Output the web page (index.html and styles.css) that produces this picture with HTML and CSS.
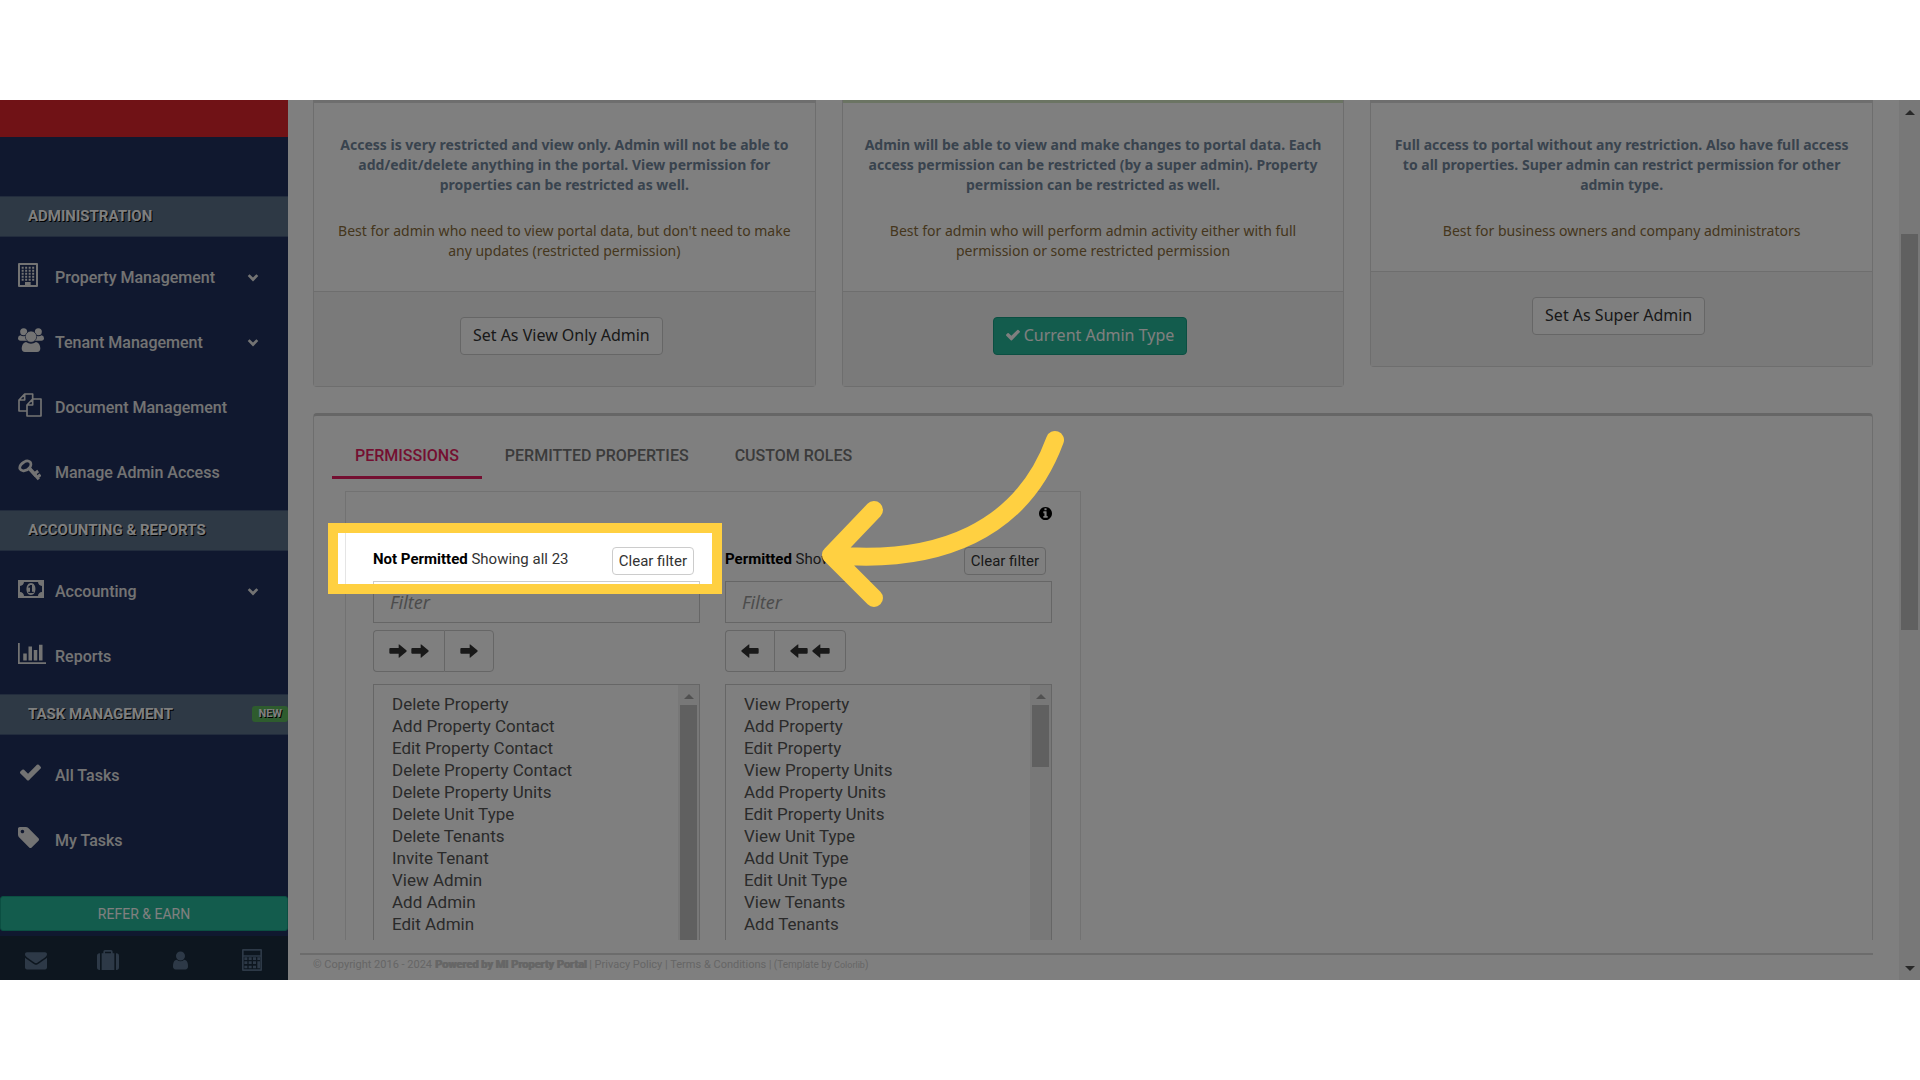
FILE: index.html
```html
<!DOCTYPE html>
<html lang="en">
<head>
<meta charset="utf-8">
<title>Admin Permissions</title>
<link rel="stylesheet" href="styles.css">
</head>
<body>
<svg class="sprite" aria-hidden="true">
  <symbol id="check" viewBox="121 300 1550 1250"><path d="M1671 566q0 40-28 68l-724 724-136 136q-28 28-68 28t-68-28l-136-136-362-362q-28-28-28-68t28-68l136-136q28-28 68-28t68 28l294 295 656-657q28-28 68-28t68 28l136 136q28 28 28 68z"/></symbol>
  <symbol id="chevron" viewBox="0 0 36 26"><path d="M5 6l13 13L31 6" fill="none" stroke="currentColor" stroke-width="8"/></symbol>
  <symbol id="right" viewBox="0 0 54 42"><path d="M4 12h25V2q0-3 3 0l20 17q2 2 0 4L32 40q-3 3-3 0V29H4q-3 0-3-3V15q0-3 3-3z"/></symbol>
  <symbol id="left" viewBox="0 0 54 42"><path d="M50 12H25V2q0-3-3 0L2 19q-2 2 0 4l20 17q3 3 3 0V29h25q3 0 3-3V15q0-3-3-3z"/></symbol>
</svg>

<div class="frame">
  <aside class="sidebar">
    <div class="brand"></div>
    <div class="profile"></div>

    <h3 class="section">Administration</h3>
    <ul class="menu">
      <li><a href="#"><span class="icon"><svg width="20" height="24" viewBox="0 0 60 72"><path fill-rule="evenodd" d="M3 0h54q3 0 3 3v66q0 3-3 3H3q-3 0-3-3V3q0-3 3-3zM6 6v60h15v-9h17v9h16V6z"/><path d="M11 14h38M11 23h38M11 32h38M11 41h38M11 50h38" fill="none" stroke="currentColor" stroke-width="6" stroke-dasharray="6 4.500"/></svg></span>Property Management<svg class="chev" width="12" height="9"><use href="#chevron"/></svg></a></li>
      <li><a href="#"><span class="icon"><svg width="26" height="24" viewBox="0 0 78 72"><circle cx="17" cy="11" r="10.500"/><circle cx="61" cy="11" r="10.500"/><path d="M7 22q10 6 17 0 1 10 5 16H8q-8 0-8-7 0-8 7-9zM71 22q-10 6-17 0-1 10-5 16h21q8 0 8-7 0-8-7-9z"/><circle cx="39" cy="26" r="17" stroke="#20305e" stroke-width="2"/><path d="M24 42q15 11 30 0 12 3 13 19 0 11-10 11H21q-10 0-10-11 1-16 13-19z"/></svg></span>Tenant Management<svg class="chev" width="12" height="9"><use href="#chevron"/></svg></a></li>
      <li><a href="#"><span class="icon"><svg width="24" height="24" viewBox="0 0 72 72"><g fill="none" stroke="currentColor" stroke-width="5" stroke-linejoin="round"><path d="M27 54H3V21L20 3h24v14M20 3v18H3M27 69V36l17-18h25v51zM44 18v18H27"/></g></svg></span>Document Management</a></li>
      <li><a href="#"><span class="icon"><svg width="23" height="22" viewBox="0 0 68 66"><g fill="none" stroke="currentColor"><path d="M18 9q10-7 18 0 5 8-1 16-7 9-16 10-10 2-14-6-2-11 13-20z" stroke-width="8"/><path d="M34 29l28 32M48 45l12-9M54 57l13-10" stroke-width="9"/></g><path d="M30 32l7-8 20 22-7 8z"/></svg></span>Manage Admin Access</a></li>
    </ul>

    <h3 class="section">Accounting &amp; Reports</h3>
    <ul class="menu">
      <li><a href="#"><span class="icon"><svg width="26" height="18" viewBox="0 0 78 54"><path fill-rule="evenodd" d="M0 0h78v54H0zM18 6Q17 17 6 18v18q11 1 12 12h42q1-11 12-12V18Q61 17 60 6zM39 9c18 0 18 36 0 36s-18-36 0-36zM37 15l-7 6 3 3 3-2v13h-5v4h16v-4h-5V15z"/></svg></span>Accounting<svg class="chev" width="12" height="9"><use href="#chevron"/></svg></a></li>
      <li><a href="#"><span class="icon"><svg width="28" height="21" viewBox="0 128 2048 1536"><path d="M640 896v512h-256v-512h256zm384-512v1024h-256v-1024h256zm1024 1152v128h-2048v-1536h128v1408h1920zm-640-896v768h-256v-768h256zm384-384v1152h-256v-1152h256z"/></svg></span>Reports</a></li>
    </ul>

    <h3 class="section">Task Management<span class="badge">NEW</span></h3>
    <ul class="menu">
      <li><a href="#"><span class="icon tick"><svg width="21" height="17"><use href="#check"/></svg></span>All Tasks</a></li>
      <li><a href="#"><span class="icon"><svg width="21" height="21" viewBox="128 128 1515 1515"><path d="M576 448q0-53-37.500-90.500t-90.500-37.500-90.500 37.500-37.500 90.500 37.500 90.500 90.500 37.500 90.500-37.500 37.500-90.500zm1067 576q0 53-37 90l-491 492q-39 37-91 37-53 0-90-37l-715-716q-38-37-64.500-101t-26.500-117v-416q0-52 38-90t90-38h416q53 0 117 26.500t102 64.500l715 714q37 39 37 91z"/></svg></span>My Tasks</a></li>
    </ul>

    <button class="refer" type="button">REFER &amp; EARN</button>
    <nav class="shortcuts">
      <a href="#" aria-label="Messages"><svg width="22" height="22" viewBox="0 0 1792 1792"><path d="M1792 710v794q0 66-47 113t-113 47h-1472q-66 0-113-47t-47-113v-794q44 49 101 87 362 246 497 345 57 42 92.500 65.500t94.500 48 110 24.500h2q51 0 110-24.500t94.500-48 92.500-65.500q170-123 498-345 57-39 100-87zm0-294q0 79-49 151t-122 123q-376 261-468 325-10 7-42.500 31t-54 38.500-52 32.500-57.500 27-50 9h-2q-23 0-50-9t-57.500-27-52-32.500-54-38.500-42.500-31q-91-64-262-182.500t-205-142.500q-62-42-117-115.500t-55-136.500q0-78 41.500-130t118.500-52h1472q65 0 112.500 47t47.500 113z"/></svg></a>
      <a href="#" aria-label="Portfolio"><svg width="22" height="20" viewBox="0 0 66 60"><path fill-rule="evenodd" d="M14 10h5V5q0-5 5-5h18q5 0 5 5v5h5v50H14zM24 10h18V5H24z"/><path d="M9 10v50H8q-8 0-8-8V18q0-8 8-8zM57 10v50h1q8 0 8-8V18q0-8-8-8z"/></svg></a>
      <a href="#" aria-label="Account"><svg width="21" height="21" viewBox="0 0 1792 1792"><path d="M1536 1399q0 109-62.500 187t-150.500 78h-854q-88 0-150.500-78t-62.500-187q0-85 8.500-160.500t31.500-152 58.500-131 94-89 134.500-34.500q131 128 313 128t313-128q76 0 134.500 34.500t94 89 58.500 131 31.500 152 8.500 160.500zm-256-887q0 159-112.500 271.500t-271.500 112.500-271.500-112.500-112.500-271.500 112.500-271.500 271.500-112.500 271.500 112.500 112.500 271.500z"/></svg></a>
      <a href="#" aria-label="Calculator"><svg width="20" height="22" viewBox="0 0 60 66"><path fill-rule="evenodd" d="M3 0h54q3 0 3 3v60q0 3-3 3H3q-3 0-3-3V3q0-3 3-3zM5 5v14h50V5zM5 23v38h50V23z"/><path d="M7 29h37M7 41h37M7 54h37" fill="none" stroke="currentColor" stroke-width="8" stroke-dasharray="9 4"/><path d="M46 25h8v8h-8zM46 37h8v21h-8z"/></svg></a>
    </nav>
  </aside>

  <div class="page">
    <main class="content">
      <section class="cards">
        <article class="card">
          <div class="card-body">
            <p class="what">Access is very restricted and view only. Admin will not be able to add/edit/delete anything in the portal. View permission for properties can be restricted as well.</p>
            <p class="best">Best for admin who need to view portal data, but don't need to make any updates (restricted permission)</p>
          </div>
          <div class="card-foot"><button class="btn" type="button">Set As View Only Admin</button></div>
        </article>
        <article class="card current">
          <div class="card-body">
            <p class="what">Admin will be able to view and make changes to portal data. Each access permission can be restricted (by a super admin). Property permission can be restricted as well.</p>
            <p class="best">Best for admin who will perform admin activity either with full permission or some restricted permission</p>
          </div>
          <div class="card-foot"><button class="btn success" type="button"><svg width="14" height="12"><use href="#check"/></svg>Current Admin Type</button></div>
        </article>
        <article class="card">
          <div class="card-body">
            <p class="what">Full access to portal without any restriction. Also have full access to all properties. Super admin can restrict permission for other admin type.</p>
            <p class="best">Best for business owners and company administrators</p>
          </div>
          <div class="card-foot"><button class="btn" type="button">Set As Super Admin</button></div>
        </article>
      </section>

      <section class="panel">
        <nav class="tabs">
          <a class="active" href="#">PERMISSIONS</a>
          <a href="#">PERMITTED PROPERTIES</a>
          <a href="#">CUSTOM ROLES</a>
        </nav>
        <div class="duallist">
          <div class="info"><svg width="13" height="13" viewBox="128 128 1536 1536"><path d="M1152 1376v-160q0-14-9-23t-23-9h-96v-512q0-14-9-23t-23-9h-320q-14 0-23 9t-9 23v160q0 14 9 23t23 9h96v320h-96q-14 0-23 9t-9 23v160q0 14 9 23t23 9h448q14 0 23-9t9-23zm-128-896v-160q0-14-9-23t-23-9h-192q-14 0-23 9t-9 23v160q0 14 9 23t23 9h192q14 0 23-9t9-23zm640 416q0 209-103 385.500t-279.500 279.500-385.500 103-385.500-103-279.500-279.500-103-385.500 103-385.500 279.500-279.500 385.500-103 385.500 103 279.500 279.500 103 385.500z"/></svg></div>
          <div class="columns">
            <div class="list">
              <div class="list-head"><label for="not-permitted"><b>Not Permitted</b> Showing all 23</label><button class="clear" type="button">Clear filter</button></div>
              <input class="filter" type="text" placeholder="Filter" aria-label="Filter not permitted">
              <div class="moves">
                <button type="button" aria-label="Move all"><svg width="18" height="14"><use href="#right"/></svg><svg width="18" height="14"><use href="#right"/></svg></button>
                <button type="button" aria-label="Move selected"><svg width="18" height="14"><use href="#right"/></svg></button>
              </div>
              <div class="listbox">
                <select id="not-permitted" multiple>
                  <option>Delete Property</option><option>Add Property Contact</option><option>Edit Property Contact</option><option>Delete Property Contact</option><option>Delete Property Units</option><option>Delete Unit Type</option><option>Delete Tenants</option><option>Invite Tenant</option><option>View Admin</option><option>Add Admin</option><option>Edit Admin</option><option>Delete Admin</option>
                </select>
                <div class="bar"><i class="up"></i><i class="thumb long"></i></div>
              </div>
            </div>
            <div class="list">
              <div class="list-head"><label for="permitted"><b>Permitted</b> Showing all 64</label><button class="clear" type="button">Clear filter</button></div>
              <input class="filter" type="text" placeholder="Filter" aria-label="Filter permitted">
              <div class="moves">
                <button type="button" aria-label="Remove selected"><svg width="18" height="14"><use href="#left"/></svg></button>
                <button type="button" aria-label="Remove all"><svg width="18" height="14"><use href="#left"/></svg><svg width="18" height="14"><use href="#left"/></svg></button>
              </div>
              <div class="listbox">
                <select id="permitted" multiple>
                  <option>View Property</option><option>Add Property</option><option>Edit Property</option><option>View Property Units</option><option>Add Property Units</option><option>Edit Property Units</option><option>View Unit Type</option><option>Add Unit Type</option><option>Edit Unit Type</option><option>View Tenants</option><option>Add Tenants</option><option>Edit Tenants</option>
                </select>
                <div class="bar"><i class="up"></i><i class="thumb"></i></div>
              </div>
            </div>
          </div>
        </div>
      </section>
    </main>
    <footer class="footer">© Copyright 2016 - 2024 <b>Powered by MI Property Portal</b> | <a href="#">Privacy Policy</a> | <a href="#">Terms &amp; Conditions</a> <small>| (Template by <a class="credit" href="#">Colorlib</a>)</small></footer>
  </div>

  <div class="scroll"><i class="up"></i><i class="thumb"></i><i class="down"></i></div>

  <div class="spotlight"></div>
  <svg class="pointer" width="270" height="190" viewBox="815 425 270 190"><path d="M1055 440C1022 530 940 565 831 555M874 510L831 555L874 598"/></svg>
</div>
</body>
</html>
```
FILE: styles.css
```css
* { box-sizing: border-box; }
body {
  margin: 0;
  padding: 100px 0;
  background: #fff;
  color: #333;
  font: 16px/20px Roboto, sans-serif;
}
a { color: inherit; text-decoration: none; }
button { font: inherit; cursor: pointer; }
svg { fill: currentColor; display: block; flex: none; }
.sprite { display: none; }

.frame {
  position: relative;
  display: flex;
  height: calc(100vh - 200px);
  overflow: hidden;
}

/* Sidebar */
.sidebar {
  display: flex;
  flex-direction: column;
  flex: none;
  width: 288px;
  background: #20305e;
  color: #e7e7e7;
}
.brand { flex: none; height: 37px; background: #e0242c; }
.profile { flex: none; height: 59px; }
.section {
  display: flex;
  align-items: center;
  flex: none;
  height: 41px;
  margin: 0;
  padding: 0 0 2px 28px;
  border: solid #44597a;
  border-width: 1px 0;
  background: #5c728a;
  color: #fff;
  font-size: 15px;
  font-weight: 700;
  text-transform: uppercase;
  text-shadow: 1px 1px #000;
}
.badge {
  margin-left: auto;
  padding: 0 6px;
  border-radius: 3px;
  background: #5cb85c;
  font-size: 11px;
  line-height: 16px;
}
.menu { margin: 0; padding: 8px 0 5px; list-style: none; }
.menu a {
  display: flex;
  align-items: center;
  height: 65px;
  padding: 0 29px 0 18px;
  font-weight: 500;
}
.icon { width: 37px; padding-bottom: 6px; }
.tick { padding-left: 2px; }
.chev { margin-left: auto; }
.refer {
  height: 35px;
  margin-top: auto;
  border: 1px solid #169f85;
  border-radius: 3px;
  background: #26b99a;
  color: #fff;
  font-size: 14px;
}
.shortcuts {
  display: grid;
  grid-template-columns: repeat(4, 1fr);
  place-items: center;
  height: 44px;
  margin-top: 5px;
  padding-top: 4px;
  background: #1a2c3e;
  color: #5a738e;
}

/* Page */
.page { display: flex; flex-direction: column; flex: 1; min-width: 0; }
.content { flex: 1; min-height: 0; overflow: hidden; padding: 0 26px 0 25px; }
.cards {
  display: grid;
  grid-template-columns: repeat(3, 1fr);
  align-items: start;
  gap: 26px;
}
.card {
  border: 1px solid #ddd;
  border-top: 0;
  border-radius: 0 0 4px 4px;
  font-family: "Noto Sans", sans-serif;
  font-size: 14px;
  text-align: center;
}
.card-body { padding: 32px 16px 30px; border-top: 3px solid #ddd; }
.current .card-body { border-top-color: #d6e9c6; }
.card p { margin: 0; }
.card .what { color: #73879c; font-weight: 700; }
.card .best { margin-top: 26px; color: #8a6d3b; }
.card-foot {
  height: 95px;
  padding: 25px 6px 0 0;
  border-top: 1px solid #ddd;
  background: #f5f5f5;
}
.btn {
  display: inline-flex;
  align-items: center;
  gap: 4px;
  height: 38px;
  padding: 0 12px 2px;
  border: 1px solid #ccc;
  border-radius: 4px;
  background: #fff;
  color: #333;
  font-size: 16px;
}
.success { border-color: #169f85; background: #26b99a; color: #fff; }

.panel {
  height: 700px;
  margin-top: 26px;
  padding: 20px 18px;
  border: 1px solid #ddd;
  border-top: 3px solid #ccc;
  border-radius: 4px;
}
.tabs { display: flex; }
.tabs a {
  padding: 0 23px;
  border-bottom: 3px solid transparent;
  color: #777;
  font-weight: 500;
  line-height: 40px;
}
.tabs .active { border-color: #e91e63; color: #e91e63; }
.duallist {
  width: calc(50% - 25px);
  height: 600px;
  margin: 12px 0 0 13px;
  padding: 15px 28px 15px 27px;
  border: 1px solid #e5e5e5;
}
.info { display: flex; justify-content: flex-end; color: #000; }
.columns { display: grid; grid-template-columns: 1fr 1fr; gap: 25px; margin-top: 27px; }
.list-head {
  display: flex;
  justify-content: space-between;
  height: 28px;
  padding-right: 6px;
  font-size: 15px;
}
.list-head label { padding-top: 2px; }
.list-head b { color: #000; }
.clear {
  padding: 0 6px;
  border: 1px solid #ccc;
  border-radius: 4px;
  background: #fff;
  color: #333;
}
.filter {
  display: block;
  width: 100%;
  height: 42px;
  margin-top: 6px;
  padding: 0 16px;
  border: 1px solid #ccc;
  background: #fff;
  font: italic 18px "Noto Sans", sans-serif;
}
.filter::placeholder { color: #999; }
.moves { display: flex; margin-top: 7px; }
.moves button {
  display: flex;
  align-items: center;
  gap: 4px;
  height: 42px;
  padding: 0 15px;
  border: 1px solid #ccc;
  border-radius: 0 4px 4px 0;
  background: #fff;
  color: #333;
}
.moves button:first-child { border-right: 0; border-radius: 4px 0 0 4px; }
.listbox { display: flex; height: 333px; margin-top: 12px; border: 1px solid #ccc; }
select {
  flex: 1;
  min-width: 0;
  padding: 9px 16px;
  border: 0;
  background: #fff;
  color: #555;
  font: 17px Roboto, sans-serif;
  scrollbar-width: none;
}
option { min-height: 22px; padding: 0 2px; line-height: 22px; }

/* Scroll bars */
.bar, .scroll {
  display: flex;
  flex-direction: column;
  align-items: center;
  flex: none;
  width: 21px;
  background: #f1f1f1;
}
.up, .down { border: solid transparent; border-width: 0 5px; }
.up { border-bottom: 5px solid #505050; }
.down { margin-top: auto; border-top: 5px solid #505050; }
.thumb { width: 17px; background: #c1c1c1; }
.bar .up { margin-top: 9px; border-bottom-color: #a3a3a3; }
.bar .thumb { height: 62px; margin-top: 6px; }
.bar .long { height: 280px; }
.scroll .up { margin-top: 10px; }
.scroll .thumb { height: 45%; margin-top: 119px; }
.scroll .down { margin-bottom: 9px; }

.footer {
  height: 27px;
  margin: 13px 26px 0 12px;
  padding-left: 13px;
  border-top: 2px solid #d9d9d9;
  color: #ccc;
  font-size: 11px;
  white-space: nowrap;
}
.footer b { text-shadow: 1px 0 #ccc; }
.footer small { font-size: 10px; }
.footer .credit { font-size: 9px; }

/* Walkthrough marks over the dimmed page */
.spotlight {
  position: absolute;
  left: 328px;
  top: 423px;
  width: 394px;
  height: 71px;
  border: 10px solid #ffd041;
  box-shadow: 0 0 0 100vmax rgba(0, 0, 0, .5);
}
.pointer { position: absolute; left: 815px; top: 325px; }
.pointer path {
  fill: none;
  stroke: #ffd041;
  stroke-width: 18;
  stroke-linecap: round;
  stroke-linejoin: round;
}
```
